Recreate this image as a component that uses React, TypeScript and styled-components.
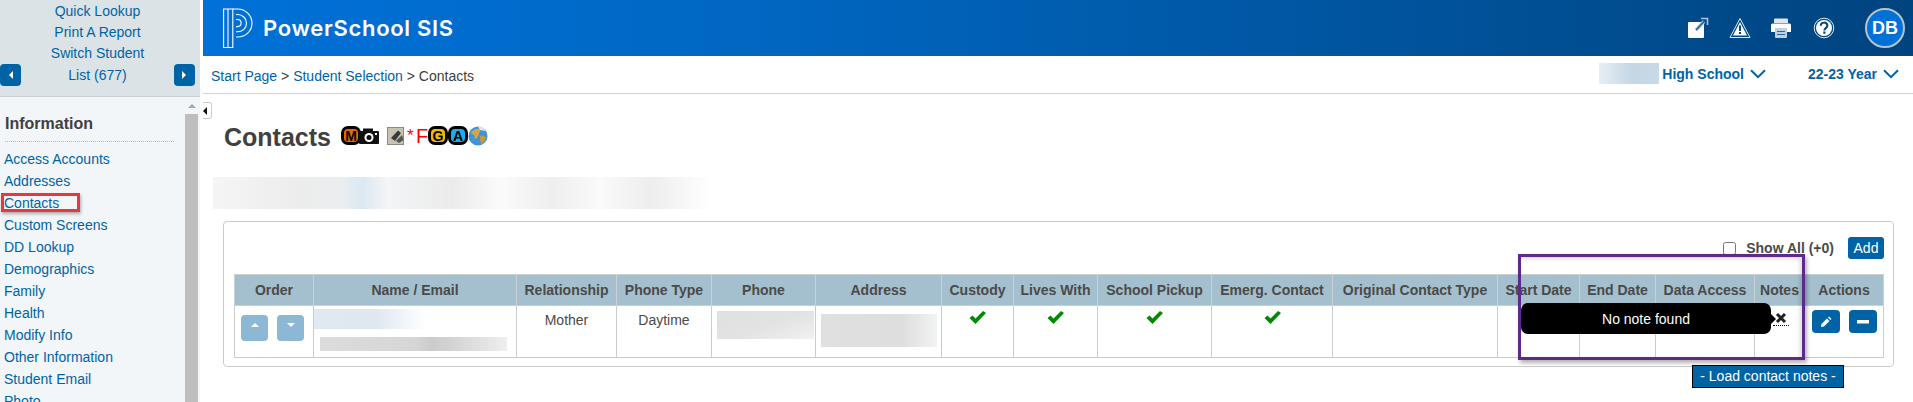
import React from 'react';
import styled, { createGlobalStyle } from 'styled-components';

const linkBlue = '#0063a6';
const textGray = '#4a4a4a';

const GlobalStyle = createGlobalStyle`
  html, body {
    margin: 0;
    padding: 0;
    background: #fff;
    font-family: "Liberation Sans", Arial, sans-serif;
    font-size: 14px;
  }
`;

const Page = styled.div`
  display: flex;
  width: 1913px;
  height: 402px;
  overflow: hidden;
  background: #fff;
`;

const Sidebar = styled.aside`
  display: flex;
  flex-direction: column;
  flex: 0 0 200px;
  background: #f3f6f9;
`;

const QuickNav = styled.nav`
  flex: 0 0 95px;
  padding-top: 1px;
  background: #dce3e6;
  border-bottom: 1px solid #cdcdcd;
  text-align: center;
`;

const QuickLink = styled.a`
  display: block;
  width: 195px;
  height: 21px;
  line-height: 21px;
  color: ${linkBlue};
`;

const ListRow = styled.div`
  display: flex;
  align-items: center;
  justify-content: space-between;
  width: 195px;
  height: 22px;
  color: ${linkBlue};
`;

const StepButton = styled.button`
  display: flex;
  align-items: center;
  justify-content: center;
  width: 21px;
  height: 22px;
  padding: 0;
  border: 0;
  border-radius: 4px;
  background: ${linkBlue};
`;

const SideBody = styled.div`
  display: flex;
  flex: 1;
  min-height: 0;
`;

const Menu = styled.div`
  flex: 1;
  padding: 17px 0 0 4px;
`;

const MenuTitle = styled.div`
  width: 169px;
  margin-left: 1px;
  padding-bottom: 8px;
  border-bottom: 1px dotted #bbb;
  margin-bottom: 6px;
  font-size: 16px;
  line-height: 19px;
  font-weight: bold;
  color: #404040;
`;

const MenuItem = styled.a`
  position: relative;
  display: block;
  height: 22px;
  line-height: 22px;
  color: ${linkBlue};
`;

const Highlight = styled.span`
  position: absolute;
  left: -3px;
  top: 1px;
  width: 79px;
  height: 19px;
  box-sizing: border-box;
  border: 3px solid #e8383f;
  box-shadow: 1px 2px 3px rgba(0, 0, 0, 0.3);
`;

const ScrollTrack = styled.div`
  display: flex;
  flex-direction: column;
  align-items: center;
  flex: 0 0 13px;
  margin-right: 2px;
`;

const ScrollArrow = styled.div`
  flex: 0 0 17px;
  display: flex;
  align-items: center;
  justify-content: center;
`;

const ScrollThumb = styled.div`
  flex: 1;
  width: 100%;
  background: #bebebe;
`;

const Main = styled.main`
  position: relative;
  flex: 1;
  margin-left: 3px;
  min-width: 0;
  display: flex;
  flex-direction: column;
`;

const AppHeader = styled.header`
  flex: 0 0 56px;
  display: flex;
  align-items: center;
  padding: 0 8px 0 20px;
  background: linear-gradient(90deg, #0071d9 0%, #0068c4 30%, #00447f 100%);
`;

const Brand = styled.div`
  margin-left: 10px;
  font-family: Inter, "Liberation Sans", sans-serif;
  font-size: 22px;
  font-weight: 600;
  letter-spacing: 0.7px;
  color: #fff;
`;

const HeaderIcons = styled.div`
  display: flex;
  align-items: center;
  margin-left: auto;
`;

const HeaderIcon = styled.span`
  display: flex;
  width: 22px;
  height: 22px;
  margin-right: 20px;
  align-items: center;
  justify-content: center;
`;

const Avatar = styled.div`
  display: flex;
  align-items: center;
  justify-content: center;
  width: 40px;
  height: 40px;
  margin-left: 10px;
  box-sizing: border-box;
  border: 2px solid #b9c2c9;
  border-radius: 50%;
  background: #0071d9;
  color: #fff;
  font-size: 18px;
  font-weight: bold;
`;

const Crumbs = styled.div`
  flex: 0 0 35px;
  display: flex;
  align-items: center;
  padding: 2px 14px 0 8px;
  border-bottom: 1px solid #d2d2d2;
  color: #404040;
`;

const CrumbLink = styled.a`
  color: ${linkBlue};
`;

const SchoolPicker = styled.div`
  display: flex;
  align-items: center;
  margin: -4px 0 0 auto;
  font-weight: bold;
  color: ${linkBlue};
`;

const PickerItem = styled.span<{ $gap: number }>`
  display: flex;
  align-items: center;
  gap: 6px;
  margin-left: ${(p) => p.$gap}px;
`;

const Redacted = styled.div<{ $w: number; $h: number; $bg: string }>`
  flex: none;
  width: ${(p) => p.$w}px;
  height: ${(p) => p.$h}px;
  background: ${(p) => p.$bg};
`;

const Collapse = styled.button`
  position: absolute;
  left: 0;
  top: 102px;
  display: flex;
  align-items: center;
  width: 9px;
  height: 17px;
  padding: 0;
  border: 1px solid #ccc;
  border-left: 0;
  border-radius: 0 3px 3px 0;
  background: #fff;
`;

const Content = styled.div`
  flex: 1;
  padding: 28px 0 0 10px;
`;

const TitleRow = styled.div`
  display: flex;
  align-items: center;
  height: 30px;
  margin-left: 11px;
  margin-bottom: 25px;
`;

const Title = styled.h1`
  margin: 0 10px 0 0;
  font-size: 25px;
  line-height: 30px;
  font-weight: bold;
  color: #404040;
`;

const AlertIcons = styled.div`
  display: flex;
  align-items: center;
  height: 20px;
  margin-top: -3px;
`;

const Badge = styled.span<{ $fill: string }>`
  display: flex;
  align-items: center;
  justify-content: center;
  width: 20px;
  height: 19px;
  box-sizing: border-box;
  border: 3px solid #000;
  border-radius: 7px;
  background: ${(p) => p.$fill};
  color: #000;
  font-size: 14px;
  font-weight: bold;
`;

const CameraIcon = styled.svg`
  margin-left: -2px;
`;

const MapIcon = styled.svg`
  margin: 0 2px 0 8px;
`;

const RedText = styled.span<{ $size: number; $w: number }>`
  width: ${(p) => p.$w}px;
  color: #f00;
  font-size: ${(p) => p.$size}px;
  line-height: 20px;
`;

const Panel = styled.section`
  width: 1671px;
  height: 146px;
  margin: 12px 0 0 10px;
  padding: 15px 10px 0;
  box-sizing: border-box;
  border: 1px solid #ccc;
  border-radius: 4px;
`;

const PanelTools = styled.div`
  display: flex;
  align-items: center;
  justify-content: flex-end;
  height: 22px;
  margin: 0 -1px 15px 0;
`;

const ShowAll = styled.label`
  display: flex;
  align-items: center;
  gap: 10px;
  margin-right: 14px;
  font-weight: bold;
  color: ${textGray};
`;

const Check = styled.span`
  width: 13px;
  height: 13px;
  box-sizing: border-box;
  border: 1px solid #767676;
  border-radius: 2.5px;
  background: #fff;
`;

const AddButton = styled.button`
  width: 36px;
  height: 22px;
  padding: 0;
  border: 0;
  border-radius: 3px;
  background: ${linkBlue};
  color: #fff;
  font-family: inherit;
  font-size: 14px;
`;

const Table = styled.table`
  width: 1649px;
  table-layout: fixed;
  border-collapse: collapse;
`;

const Col = styled.col<{ $w: number }>`
  width: ${(p) => p.$w}px;
`;

const Th = styled.th`
  height: 30px;
  padding: 0;
  border: 1px solid #cbd0d3;
  background: #a4bfcd;
  color: ${textGray};
  font-size: 14px;
  font-weight: bold;
  text-align: center;
  white-space: nowrap;
`;

const Td = styled.td`
  height: 51px;
  padding: 0;
  border: 1px solid #ccc;
  vertical-align: top;
  text-align: center;
  color: ${textGray};
`;

const CellText = styled.div`
  padding-top: 5px;
  line-height: 18px;
`;

const OrderCell = styled.div`
  display: flex;
  gap: 9px;
  padding: 9px 0 0 6px;
`;

const NameCell = styled.div`
  display: flex;
  flex-direction: column;
  padding-top: 3px;
`;

const Inset = styled.div<{ $top: number; $left: number }>`
  padding: ${(p) => p.$top}px 0 0 ${(p) => p.$left}px;
`;

const OrderButton = styled.button`
  display: flex;
  align-items: center;
  justify-content: center;
  width: 27px;
  height: 26px;
  padding: 0 0 6px;
  border: 0;
  border-radius: 4px;
  background: #8cb8d6;
`;

const ActionRow = styled.div`
  display: flex;
  gap: 9px;
  padding: 4px 0 0 7px;
`;

const ActionButton = styled.button`
  display: flex;
  align-items: center;
  justify-content: center;
  width: 28px;
  height: 23px;
  padding: 0;
  border: 0;
  border-radius: 4px;
  background: ${linkBlue};
`;

const CheckMark = styled.svg`
  display: block;
  margin: 5px auto 0;
`;

const NoteMark = styled.div`
  width: 16px;
  height: 17px;
  margin: 3px 0 0 18px;
  padding-top: 3px;
  box-sizing: border-box;
  line-height: 0;
  border-bottom: 1px dotted #000;
  text-align: center;
`;

/* annotation boxes lying over the table */
const PurpleBox = styled.div`
  position: absolute;
  left: 1315px;
  top: 254px;
  width: 287px;
  height: 106px;
  box-sizing: border-box;
  border: 3px solid #5c2a8c;
  box-shadow: 2px 3px 4px rgba(0, 0, 0, 0.3), inset -2px 2px 4px rgba(0, 0, 0, 0.15);
`;

const NoteTip = styled.div`
  position: absolute;
  left: 1318px;
  top: 303px;
  display: flex;
  align-items: center;
  justify-content: center;
  width: 250px;
  height: 31px;
  border-radius: 7px;
  background: #000;
  color: #fff;
  font-size: 14px;
  &::after {
    content: '';
    position: absolute;
    right: -5px;
    top: 11px;
    border-left: 5px solid #000;
    border-top: 5px solid transparent;
    border-bottom: 5px solid transparent;
  }
`;

const LoadNotes = styled.div`
  position: absolute;
  left: 1489px;
  top: 365px;
  width: 152px;
  height: 23px;
  line-height: 21px;
  box-sizing: border-box;
  border: 1px solid #000;
  background: ${linkBlue};
  color: #fff;
  font-size: 14px;
  text-align: center;
`;

const columns: [string, number][] = [
  ['Order', 79],
  ['Name / Email', 203],
  ['Relationship', 100],
  ['Phone Type', 95],
  ['Phone', 104],
  ['Address', 126],
  ['Custody', 72],
  ['Lives With', 84],
  ['School Pickup', 114],
  ['Emerg. Contact', 121],
  ['Original Contact Type', 165],
  ['Start Date', 82],
  ['End Date', 76],
  ['Data Access', 99],
  ['Notes', 50],
  ['Actions', 79],
];

const menuItems = [
  'Access Accounts',
  'Addresses',
  'Contacts',
  'Custom Screens',
  'DD Lookup',
  'Demographics',
  'Family',
  'Health',
  'Modify Info',
  'Other Information',
  'Student Email',
  'Photo',
];

const Triangle = ({ dir, color = '#fff', size = 4 }: { dir: 'l' | 'r' | 'u' | 'd'; color?: string; size?: number }) => {
  const s = size;
  const points = {
    l: `${s},0 ${s},${2 * s} 0,${s}`,
    r: `0,0 0,${2 * s} ${s},${s}`,
    u: `0,${s} ${2 * s},${s} ${s},0`,
    d: `0,0 ${2 * s},0 ${s},${s}`,
  }[dir];
  const wide = dir === 'u' || dir === 'd';
  return (
    <svg width={wide ? 2 * s : s} height={wide ? s : 2 * s}>
      <polygon points={points} fill={color} />
    </svg>
  );
};

const Chevron = () => (
  <svg width="16" height="10" viewBox="0 0 16 10">
    <path d="M1 1.2 8 8.2 15 1.2" fill="none" stroke={linkBlue} strokeWidth="2" />
  </svg>
);

const GreenCheck = () => (
  <CheckMark width="17" height="13" viewBox="0 0 17 13">
    <path d="M0.5 7 3.500 4.500 6.500 7.500 14 0 17 2 6.500 13Z" fill="#008a00" />
  </CheckMark>
);

const Logo = () => (
  <svg width="30" height="40" viewBox="0 0 30 40" fill="none" stroke="#fff" strokeWidth="1.1">
    <path d="M0.6 1h9.2v38.5H0.6Z" />
    <path d="M5 1v38.5" />
    <path d="M9.8 1h4.5c8.2 0 14.7 6.4 14.7 14.3S22.5 29 14.5 29H13" />
    <path d="M13 6.5h1.5c5 0 9 3.8 9 8.7s-4 8.6-9 8.6H13" />
    <path d="M13 11.5h1.5c2 0 3.6 1.6 3.6 3.6s-1.6 3.5-3.6 3.5H13" />
  </svg>
);

const App = () => (
  <Page>
    <GlobalStyle />
    <Sidebar>
      <QuickNav>
        <QuickLink>Quick Lookup</QuickLink>
        <QuickLink>Print A Report</QuickLink>
        <QuickLink>Switch Student</QuickLink>
        <ListRow>
          <StepButton>
            <Triangle dir="l" />
          </StepButton>
          List (677)
          <StepButton>
            <Triangle dir="r" />
          </StepButton>
        </ListRow>
      </QuickNav>
      <SideBody>
        <Menu>
          <MenuTitle>Information</MenuTitle>
          {menuItems.map((item) => (
            <MenuItem key={item}>
              {item}
              {item === 'Contacts' && <Highlight />}
            </MenuItem>
          ))}
        </Menu>
        <ScrollTrack>
          <ScrollArrow>
            <Triangle dir="u" color="#a8a8a8" />
          </ScrollArrow>
          <ScrollThumb />
        </ScrollTrack>
      </SideBody>
    </Sidebar>

    <Main>
      <AppHeader>
        <Logo />
        <Brand>PowerSchool SIS</Brand>
        <HeaderIcons>
          <HeaderIcon>
            <svg width="22" height="22" viewBox="0 0 22 22">
              <rect x="1" y="5" width="16" height="16" rx="1" fill="#fff" />
              <path d="M9 13 17 4.500" stroke="#a9c4dc" strokeWidth="3.400" />
              <path d="M9 13 17 4.500" stroke="#16568f" strokeWidth="1.200" />
              <path d="M14 1.500h6.500V8" fill="none" stroke="#a9c4dc" strokeWidth="1.600" />
            </svg>
          </HeaderIcon>
          <HeaderIcon>
            <svg width="22" height="22" viewBox="0 0 22 22">
              <path d="M11 1.500 21 20.500H1Z" fill="none" stroke="#dfe8f0" strokeWidth="1" />
              <path d="M11 5 18 18.500H4Z" fill="#fff" />
              <path d="M10 8.500h2v5.500h-2ZM10 15h2v2h-2Z" fill="#00447f" />
            </svg>
          </HeaderIcon>
          <HeaderIcon>
            <svg width="22" height="22" viewBox="0 0 22 22">
              <path d="M4 1.500h12a1 1 0 0 1 1 1V6H3V2.500a1 1 0 0 1 1-1Z" fill="#dfe6ee" />
              <path d="M1.500 6.500h17a1.500 1.500 0 0 1 1.500 1.500V15H0V8a1.500 1.500 0 0 1 1.500-1.500Z" fill="#fff" />
              <path d="M4 11h12v9a1 1 0 0 1-1 1H5a1 1 0 0 1-1-1Z" fill="#bfd0e0" />
              <path d="M6 14.500h8M6 17.500h8" stroke="#2a6598" strokeWidth="1" />
            </svg>
          </HeaderIcon>
          <HeaderIcon>
            <svg width="22" height="22" viewBox="0 0 22 22">
              <circle cx="11" cy="11" r="9.800" fill="none" stroke="#dfe8f0" strokeWidth="1" />
              <circle cx="11" cy="11" r="8" fill="#fff" />
              <path d="M7.800 8.800c0-4.200 6.600-4.200 6.600-.2 0 2.600-3 2.400-3 4.800" fill="none" stroke="#00447f" strokeWidth="2" />
              <rect x="10.300" y="14.500" width="2.200" height="2.200" fill="#00447f" />
            </svg>
          </HeaderIcon>
          <Avatar>DB</Avatar>
        </HeaderIcons>
      </AppHeader>

      <Crumbs>
        <CrumbLink>Start Page</CrumbLink>&nbsp;&gt;&nbsp;<CrumbLink>Student Selection</CrumbLink>&nbsp;&gt;&nbsp;Contacts
        <SchoolPicker>
          <Redacted $w={60} $h={21} $bg="linear-gradient(90deg, #e8eef3, #c4d7e5 55%, #c8dae6)" />
          <PickerItem $gap={3}>
            High School <Chevron />
          </PickerItem>
          <PickerItem $gap={42}>
            22-23 Year <Chevron />
          </PickerItem>
        </SchoolPicker>
      </Crumbs>

      <Collapse>
        <Triangle dir="l" color="#111" size={4} />
      </Collapse>

      <Content>
        <TitleRow>
          <Title>Contacts</Title>
          <AlertIcons>
            <Badge $fill="#e66a00">M</Badge>
            <CameraIcon width="20" height="16" viewBox="0 0 20 16">
              <rect x="0" y="3" width="20" height="13" rx="1" fill="#111" />
              <rect x="4" y="0.500" width="10" height="4" fill="#111" />
              <circle cx="10" cy="9.500" r="4.500" fill="#fff" />
              <circle cx="10" cy="9.500" r="2.500" fill="#111" />
              <rect x="16" y="5" width="2" height="2" fill="#fff" />
            </CameraIcon>
            <MapIcon width="18" height="18" viewBox="0 0 18 18">
              <rect x="0.500" y="0.500" width="16" height="17" fill="#c9c2b3" stroke="#8f8a7d" />
              <path d="M4 11 11 3.500 14 6 8 14Z" fill="#3a3a3a" />
              <path d="M9 14 15 8 16.500 13 12 16Z" fill="#555" />
            </MapIcon>
            <RedText $size={17} $w={9}>
              *
            </RedText>
            <RedText $size={20} $w={12}>
              F
            </RedText>
            <Badge $fill="#f2b800">G</Badge>
            <Badge $fill="#18aef0">A</Badge>
            <svg width="20" height="20" viewBox="0 0 20 20">
              <circle cx="10" cy="10" r="9.500" fill="#3f95d8" />
              <path d="M3 6c3-3 7-4 9-3 1 2-1 3-1 5s-2 3-3 5c-2 0-1-3-2-4S3 8 3 6Z" fill="#d9a43a" />
              <path d="M12 10c3-1 5 0 6 2-1 3-3 5-5 6-1-2 0-3-1-5Z" fill="#c89a3f" />
              <path d="M10 .500a9.500 9.500 0 0 1 8 4.500c-3 0-4-1-6-1Z" fill="#dfe7ea" />
            </svg>
          </AlertIcons>
        </TitleRow>

        <Redacted
          $w={497}
          $h={32}
          $bg="linear-gradient(90deg, #f5f5f5, #ececec 18%, #ebeef0 26%, #dbe8f2 30%, #f3f5f6 35%, #ebebeb 48%, #fbfbfb 58%, #eeeeee 68%, #fafafa 78%, #ededed 88%, #ffffff 100%)"
        />

        <Panel>
          <PanelTools>
            <ShowAll>
              <Check />
              Show All (+0)
            </ShowAll>
            <AddButton>Add</AddButton>
          </PanelTools>
          <Table>
            <colgroup>
              {columns.map(([name, width]) => (
                <Col key={name} $w={width} />
              ))}
            </colgroup>
            <thead>
              <tr>
                {columns.map(([name]) => (
                  <Th key={name}>{name}</Th>
                ))}
              </tr>
            </thead>
            <tbody>
              <tr>
                <Td>
                  <OrderCell>
                    <OrderButton>
                      <Triangle dir="u" />
                    </OrderButton>
                    <OrderButton>
                      <Triangle dir="d" />
                    </OrderButton>
                  </OrderCell>
                </Td>
                <Td>
                  <NameCell>
                    <Redacted $w={112} $h={20} $bg="linear-gradient(90deg, #e0e8f1, #dfe7f0 55%, #ffffff)" />
                    <Inset $top={8} $left={6}>
                      <Redacted $w={187} $h={14} $bg="linear-gradient(90deg, #dcdcdc, #d6d6d6 50%, #cbcbcb 60%, #e0e0e0 85%, #efefef)" />
                    </Inset>
                  </NameCell>
                </Td>
                <Td>
                  <CellText>Mother</CellText>
                </Td>
                <Td>
                  <CellText>Daytime</CellText>
                </Td>
                <Td>
                  <Inset $top={5} $left={5}>
                    <Redacted $w={97} $h={28} $bg="linear-gradient(160deg, #e0e0e0, #e3e3e3 55%, #f1f1f1)" />
                  </Inset>
                </Td>
                <Td>
                  <Inset $top={8} $left={5}>
                    <Redacted $w={116} $h={33} $bg="linear-gradient(90deg, #e0e0e0, #dedede 70%, #f2f3f3)" />
                  </Inset>
                </Td>
                <Td>
                  <GreenCheck />
                </Td>
                <Td>
                  <GreenCheck />
                </Td>
                <Td>
                  <GreenCheck />
                </Td>
                <Td>
                  <GreenCheck />
                </Td>
                <Td />
                <Td />
                <Td />
                <Td />
                <Td>
                  <NoteMark>
                    <svg width="12" height="12" viewBox="0 0 12 12">
                      <path d="M2 2 10 10M10 2 2 10" stroke="#222" strokeWidth="3" />
                    </svg>
                  </NoteMark>
                </Td>
                <Td>
                  <ActionRow>
                    <ActionButton>
                      <svg width="12" height="12" viewBox="0 0 12 12">
                        <path d="M1 11 1.500 8 7 2.500 9.500 5 4 10.500Z" fill="#fff" />
                        <path d="M8 1.500 9 .500 11.500 3 10.500 4Z" fill="#fff" />
                      </svg>
                    </ActionButton>
                    <ActionButton>
                      <svg width="12" height="4" viewBox="0 0 12 4">
                        <rect width="12" height="3.500" fill="#fff" />
                      </svg>
                    </ActionButton>
                  </ActionRow>
                </Td>
              </tr>
            </tbody>
          </Table>
        </Panel>
      </Content>

      <PurpleBox />
      <NoteTip>No note found</NoteTip>
      <LoadNotes>- Load contact notes -</LoadNotes>
    </Main>
  </Page>
);

export default App;
